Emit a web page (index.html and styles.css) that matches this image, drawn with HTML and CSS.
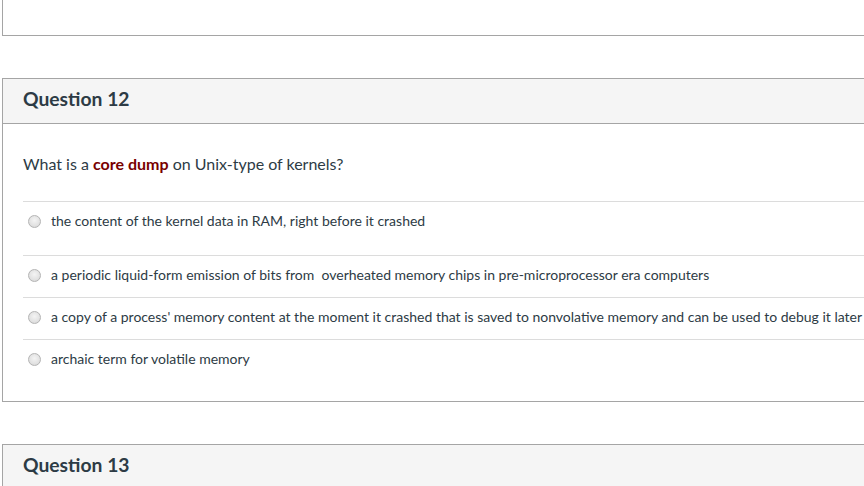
FILE: index.html
```html
<!DOCTYPE html>
<html>
<head>
<meta charset="utf-8">
<link rel="stylesheet" href="styles.css">
</head>
<body>
<div class="page">
  <div class="prev-box"></div>
  <div class="question">
    <div class="q-header"><h2 class="q-title">Question 12</h2></div>
    <div class="q-body">
      <p class="q-text">What is a <strong class="term">core dump</strong> on Unix-type of kernels?</p>
      <div class="answers">
        <label class="answer answer-first"><span class="radio"></span><span class="a-text">the content of the kernel data in RAM, right before it crashed</span></label>
        <label class="answer"><span class="radio"></span><span class="a-text">a periodic liquid-form emission of bits from&nbsp; overheated memory chips in pre-microprocessor era computers</span></label>
        <label class="answer"><span class="radio"></span><span class="a-text">a copy of a process' memory content at the moment it crashed that is saved to nonvolative memory and can be used to debug it later</span></label>
        <label class="answer"><span class="radio"></span><span class="a-text">archaic term for volatile memory</span></label>
      </div>
    </div>
  </div>
  <div class="question">
    <div class="q-header"><h2 class="q-title">Question 13</h2></div>
  </div>
</div>
</body>
</html>
```

FILE: styles.css
```css
html, body {
  margin: 0;
  padding: 0;
  overflow: hidden;
  background: #fff;
}
body {
  font-family: Lato, "Open Sans", sans-serif;
  color: #2d3b45;
}
.page {
  width: 1100px;
  padding-left: 2px;
}
.prev-box {
  height: 35px;
  border-left: 1px solid #a5a5a5;
  border-bottom: 1px solid #a5a5a5;
  margin-bottom: 42px;
}
.question {
  border-left: 1px solid #a5a5a5;
  border-top: 1px solid #a5a5a5;
  border-bottom: 1px solid #a5a5a5;
  margin-bottom: 42px;
}
.q-header {
  background: #f5f5f5;
  border-bottom: 1px solid #a5a5a5;
  height: 44px;
  display: flex;
  align-items: center;
  padding-left: 20px;
}
.q-title {
  margin: 0 0 4px 0;
  font-size: 19.3px;
  font-weight: 700;
  line-height: 22px;
  color: #2d3b45;
}
.q-body {
  padding: 29px 0 20px 20px;
}
.q-text {
  margin: 0 0 26px 0;
  font-size: 16px;
  line-height: 22px;
}
.term {
  color: #780000;
  font-weight: 700;
}
.answers {
  display: flex;
  flex-direction: column;
}
.answer {
  display: flex;
  align-items: center;
  border-top: 1px solid #dcdcdc;
  padding: 9px 0 12px 5px;
  font-size: 14px;
  line-height: 20px;
  white-space: nowrap;
}
.answer-first {
  padding-bottom: 24px;
}
.radio {
  width: 11px;
  height: 11px;
  border-radius: 50%;
  border: 1px solid #b4b4b4;
  background: radial-gradient(circle at 50% 40%, #f4f4f4 0%, #e2e2e2 60%, #d2d2d2 100%);
  margin-right: 10px;
  flex: none;
}
.a-text {
  color: #2d3b45;
}
```
